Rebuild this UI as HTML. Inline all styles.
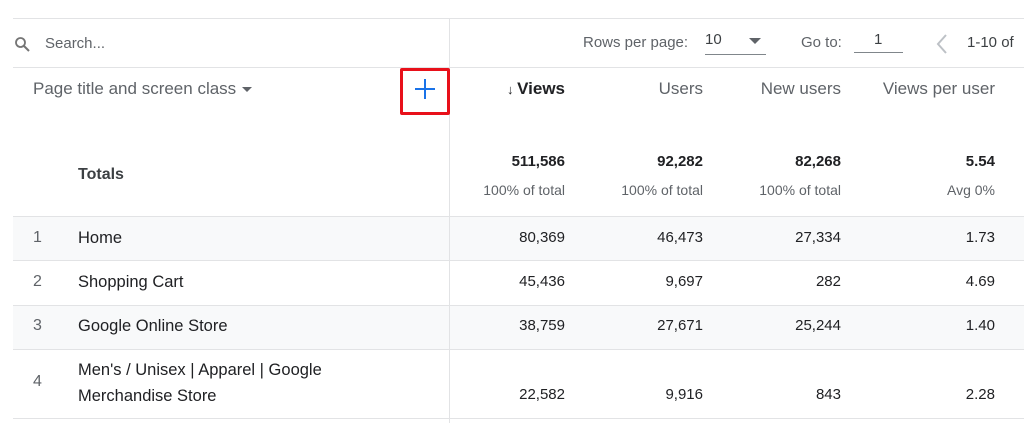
<!DOCTYPE html>
<html><head><style>
body{margin:0;width:1024px;height:423px;background:#fff;font-family:"Liberation Sans",Arial,sans-serif;position:relative;overflow:hidden;color:#202124}
.a{position:absolute;white-space:nowrap}
.h{position:absolute;height:1px;background:#e2e3e5;left:13px;right:0}
.r{text-align:right}
.g{color:#5f6368}
</style></head><body>
<div class="a" style="left:13px;top:217px;width:1011px;height:43px;background:#f8f9fa"></div>
<div class="a" style="left:13px;top:306px;width:1011px;height:43px;background:#f8f9fa"></div>
<div class="h" style="top:18px"></div>
<div class="h" style="top:67px"></div>
<div class="h" style="top:216px"></div>
<div class="h" style="top:260px"></div>
<div class="h" style="top:305px"></div>
<div class="h" style="top:349px"></div>
<div class="h" style="top:418px"></div>
<div class="a" style="left:449px;top:18px;width:1px;height:405px;background:#e2e3e5"></div>

<svg class="a" style="left:14px;top:36px" width="18" height="18" viewBox="0 0 18 18"><circle cx="6.5" cy="6.5" r="4.5" fill="none" stroke="#757575" stroke-width="1.8"/><path d="M10 10l5 5" stroke="#757575" stroke-width="2"/></svg>
<div class="a g" style="left:45px;top:35px;font-size:15px">Search...</div>

<div class="a g" style="left:583px;top:34px;font-size:15px">Rows per page:</div>
<div class="a" style="left:705px;top:31px;font-size:15px;color:#3c4043">10</div>
<div class="a" style="left:749px;top:38px;width:0;height:0;border-left:6px solid transparent;border-right:6px solid transparent;border-top:6px solid #5f6368"></div>
<div class="a" style="left:705px;top:54px;width:61px;height:1px;background:#80868b"></div>
<div class="a g" style="left:801px;top:34px;font-size:15px">Go to:</div>
<div class="a" style="left:874px;top:31px;font-size:15px;color:#3c4043">1</div>
<div class="a" style="left:854px;top:52px;width:49px;height:1px;background:#80868b"></div>
<svg class="a" style="left:935px;top:33px" width="14" height="22"><path d="M11 2L3 11l8 9" fill="none" stroke="#bdc1c6" stroke-width="2"/></svg>
<div class="a" style="left:967px;top:34px;font-size:15px;color:#3c4043">1-10 of</div>

<div class="a g" style="left:33px;top:79px;font-size:17px">Page title and screen class</div>
<div class="a" style="left:242px;top:87px;width:0;height:0;border-left:5px solid transparent;border-right:5px solid transparent;border-top:5px solid #5f6368"></div>
<div class="a" style="left:400px;top:68px;width:44px;height:41px;border:3px solid #e8101a;border-radius:2px"></div>
<svg class="a" style="left:414px;top:78px" width="22" height="22"><path d="M11 1v20M1 11h20" stroke="#1a73e8" stroke-width="2"/></svg>

<div class="a r" style="right:459px;top:79px;font-size:17px;font-weight:bold;color:#202124"><span style="font-size:13px;font-weight:normal">↓ </span>Views</div>
<div class="a r g" style="right:321px;top:79px;font-size:17px">Users</div>
<div class="a r g" style="right:183px;top:79px;font-size:17px">New users</div>
<div class="a r g" style="right:29px;top:79px;font-size:17px">Views per user</div>

<div class="a" style="left:78px;top:166px;font-size:16px;font-weight:bold;color:#3c4043">Totals</div>
<div class="a r" style="right:459px;top:153px;font-size:15px;font-weight:bold">511,586</div>
<div class="a r" style="right:321px;top:153px;font-size:15px;font-weight:bold">92,282</div>
<div class="a r" style="right:183px;top:153px;font-size:15px;font-weight:bold">82,268</div>
<div class="a r" style="right:29px;top:153px;font-size:15px;font-weight:bold">5.54</div>
<div class="a r g" style="right:459px;top:182px;font-size:14px">100% of total</div>
<div class="a r g" style="right:321px;top:182px;font-size:14px">100% of total</div>
<div class="a r g" style="right:183px;top:182px;font-size:14px">100% of total</div>
<div class="a r g" style="right:29px;top:182px;font-size:14px">Avg 0%</div>

<div class="a g" style="left:33px;top:229px;font-size:16px">1</div>
<div class="a" style="left:78px;top:229px;font-size:16.5px">Home</div>
<div class="a r" style="right:459px;top:229px;font-size:15px">80,369</div>
<div class="a r" style="right:321px;top:229px;font-size:15px">46,473</div>
<div class="a r" style="right:183px;top:229px;font-size:15px">27,334</div>
<div class="a r" style="right:29px;top:229px;font-size:15px">1.73</div>

<div class="a g" style="left:33px;top:273px;font-size:16px">2</div>
<div class="a" style="left:78px;top:273px;font-size:16.5px">Shopping Cart</div>
<div class="a r" style="right:459px;top:273px;font-size:15px">45,436</div>
<div class="a r" style="right:321px;top:273px;font-size:15px">9,697</div>
<div class="a r" style="right:183px;top:273px;font-size:15px">282</div>
<div class="a r" style="right:29px;top:273px;font-size:15px">4.69</div>

<div class="a g" style="left:33px;top:317px;font-size:16px">3</div>
<div class="a" style="left:78px;top:317px;font-size:16.5px">Google Online Store</div>
<div class="a r" style="right:459px;top:317px;font-size:15px">38,759</div>
<div class="a r" style="right:321px;top:317px;font-size:15px">27,671</div>
<div class="a r" style="right:183px;top:317px;font-size:15px">25,244</div>
<div class="a r" style="right:29px;top:317px;font-size:15px">1.40</div>

<div class="a g" style="left:33px;top:373px;font-size:16px">4</div>
<div class="a" style="left:78px;top:357px;font-size:16.5px;line-height:26px">Men's / Unisex | Apparel | Google<br>Merchandise Store</div>
<div class="a r" style="right:459px;top:386px;font-size:15px">22,582</div>
<div class="a r" style="right:321px;top:386px;font-size:15px">9,916</div>
<div class="a r" style="right:183px;top:386px;font-size:15px">843</div>
<div class="a r" style="right:29px;top:386px;font-size:15px">2.28</div>
</body></html>
